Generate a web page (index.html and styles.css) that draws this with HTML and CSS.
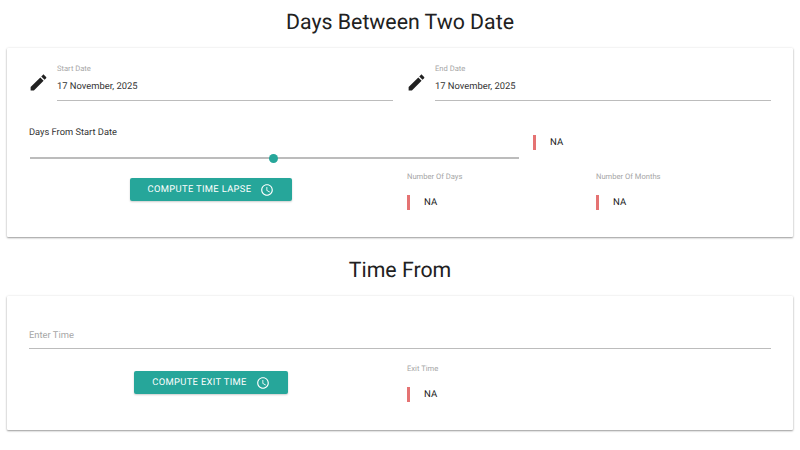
FILE: index.html
```html
<!DOCTYPE html>
<html lang="en">
<head>
    <meta charset="UTF-8">
    <meta name="viewport" content="width=device-width, initial-scale=1.0">
    <title>Days Between Two Date</title>
    <link rel="stylesheet" href="styles.css">
</head>
<body>
    <div id="app">
        <h1>Days Between Two Date</h1>
        <div class="card card-dates">
            <div class="row date-row">
                <div class="date-field">
                    <svg class="edit-icon" viewBox="0 0 24 24"><path d="M3 17.25V21h3.75L17.81 9.94l-3.75-3.75L3 17.25zM20.71 7.04c.39-.39.39-1.02 0-1.41l-2.34-2.34c-.39-.39-1.02-.39-1.41 0l-1.83 1.83 3.75 3.75 1.83-1.83z"/></svg>
                    <div class="form-group">
                        <label for="startDate">Start Date</label>
                        <input type="text" id="startDate" value="17 November, 2025">
                    </div>
                </div>
                <div class="date-field">
                    <svg class="edit-icon" viewBox="0 0 24 24"><path d="M3 17.25V21h3.75L17.81 9.94l-3.75-3.75L3 17.25zM20.71 7.04c.39-.39.39-1.02 0-1.41l-2.34-2.34c-.39-.39-1.02-.39-1.41 0l-1.83 1.83 3.75 3.75 1.83-1.83z"/></svg>
                    <div class="form-group">
                        <label for="endDate">End Date</label>
                        <input type="text" id="endDate" value="17 November, 2025">
                    </div>
                </div>
            </div>
            <div class="slider-row">
                <div class="slider-box">
                    <div class="slider-label">Days From Start Date</div>
                    <div class="slider-track">
                        <span class="slider-thumb" style="left: 50%"></span>
                    </div>
                </div>
                <div class="result slider-result">NA</div>
            </div>
            <div class="row action-row">
                <div class="action">
                    <button class="compute-button" type="button">
                        COMPUTE TIME LAPSE
                        <svg class="clock-icon" viewBox="0 0 24 24"><path d="M11.99 2C6.47 2 2 6.48 2 12s4.47 10 9.99 10C17.52 22 22 17.52 22 12S17.52 2 11.99 2zM12 20c-4.42 0-8-3.58-8-8s3.58-8 8-8 8 3.58 8 8-3.58 8-8 8zm.5-13H11v6l5.25 3.15.75-1.23-4.5-2.67z"/></svg>
                    </button>
                </div>
                <div class="outputs">
                    <div class="output">
                        <div class="output-label">Number Of Days</div>
                        <div class="result">NA</div>
                    </div>
                    <div class="output">
                        <div class="output-label">Number Of Months</div>
                        <div class="result">NA</div>
                    </div>
                </div>
            </div>
        </div>

        <h1 class="second-title">Time From</h1>
        <div class="card card-time">
            <input class="time-input" type="text" placeholder="Enter Time">
            <div class="row action-row">
                <div class="action">
                    <button class="compute-button" type="button">
                        COMPUTE EXIT TIME
                        <svg class="clock-icon" viewBox="0 0 24 24"><path d="M11.99 2C6.47 2 2 6.48 2 12s4.47 10 9.99 10C17.52 22 22 17.52 22 12S17.52 2 11.99 2zM12 20c-4.42 0-8-3.58-8-8s3.58-8 8-8 8 3.58 8 8-3.58 8-8 8zm.5-13H11v6l5.25 3.15.75-1.23-4.5-2.67z"/></svg>
                    </button>
                </div>
                <div class="outputs">
                    <div class="output">
                        <div class="output-label">Exit Time</div>
                        <div class="result">NA</div>
                    </div>
                </div>
            </div>
        </div>
    </div>
</body>
</html>
```

FILE: styles.css
```css
html, body {
  margin: 0;
  height: 100%;
  background-color: #fff;
  overflow: hidden;
}

body {
  font-family: Roboto, "Liberation Sans", sans-serif;
  color: #212121;
  text-rendering: geometricPrecision;
}

#app {
  padding: 0 7px;
}

h1 {
  margin: 0;
  height: 48px;
  line-height: 45px;
  font-size: 21.3px;
  font-weight: 400;
  text-align: center;
}

.second-title {
  margin-top: 11px;
}

.card {
  box-sizing: border-box;
  padding: 0 22px;
  border-radius: 1px;
  background-color: #fff;
  box-shadow: 0 1px 2px rgba(0, 0, 0, 0.38), 0 0 3px rgba(0, 0, 0, 0.07);
}

.card-dates {
  height: 189px;
  padding-top: 15px;
}

.card-time {
  height: 134px;
  padding-top: 26px;
}

.row {
  display: grid;
  grid-template-columns: 364px 364px;
  column-gap: 14px;
}

.date-field {
  display: flex;
  align-items: center;
}

.edit-icon {
  flex: none;
  width: 21px;
  height: 21px;
  margin: 0 8px 0 -1px;
  fill: #212121;
}

.form-group {
  flex: 1;
}

label, .output-label {
  display: block;
  font-size: 7.6px;
  line-height: 12px;
  color: #a6a6a6;
}

input {
  display: block;
  box-sizing: border-box;
  width: 100%;
  height: 26px;
  padding: 0 0 3px;
  border: none;
  border-bottom: 1px solid #bcbcbc;
  outline: none;
  font-family: inherit;
  font-size: 9.4px;
  color: #333;
  text-rendering: geometricPrecision;
}

.slider-row {
  display: flex;
  column-gap: 14px;
  margin-top: 25px;
}

.slider-box {
  width: 490px;
}

.slider-label {
  font-size: 9.3px;
  line-height: 14px;
  color: #333;
}

.slider-track {
  position: relative;
  height: 2px;
  margin: 17px 0 0 1px;
  background-color: #bcbcbc;
}

.slider-thumb {
  position: absolute;
  top: -3.5px;
  width: 9px;
  height: 9px;
  margin-left: -5.5px;
  border-radius: 50%;
  background-color: #26a69a;
}

.result {
  height: 15px;
  margin-top: 12px;
  padding-left: 14px;
  border-left: 3px solid #e57373;
  font-size: 9.6px;
  line-height: 15px;
}

.slider-result {
  margin-top: 9px;
}

.action-row {
  margin-top: 19px;
}

.action {
  display: flex;
  justify-content: center;
  align-items: flex-start;
}

.compute-button {
  display: flex;
  align-items: center;
  height: 23px;
  padding: 0 18px;
  border: none;
  border-radius: 2px;
  background-color: #26a69a;
  color: #fff;
  font-family: inherit;
  font-size: 9.4px;
  letter-spacing: 0.33px;
  text-rendering: geometricPrecision;
  box-shadow: 0 1px 2px rgba(0, 0, 0, 0.2);
  cursor: pointer;
}

.clock-icon {
  width: 14px;
  height: 14px;
  margin-left: 9px;
  fill: #fff;
}

.outputs {
  display: flex;
  margin-top: -7px;
}

.output {
  flex: 0 0 189px;
}

.output + .output {
  flex: 1;
  min-width: 0;
}

.time-input {
  height: 27px;
  padding-bottom: 0;
}

.time-input::placeholder {
  color: #a6a6a6;
  opacity: 1;
}

.card-time .action-row {
  margin-top: 22px;
}

.card-time .outputs {
  margin-top: -8px;
}
```
